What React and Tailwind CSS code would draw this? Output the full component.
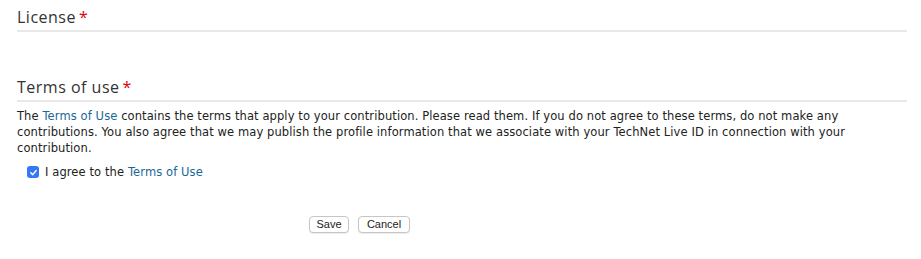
export default function App() {
  return (
    <div className="w-[921px] h-[259px] bg-white px-[17px] pt-[5px] text-[#333]" style={{ fontFamily: '"DejaVu Sans", Verdana, sans-serif' }}>
      <div className="w-[890px]">
        <h2 className="text-[16px] leading-[24px] tracking-[0.5px] text-[#333] pb-[1px] border-b-2 border-[#e8e8e8]" style={{ fontFamily: '"Open Sans", sans-serif' }}>
          License<span className="text-[#e50000] ml-[3px]">*</span>
        </h2>
        <h2 className="mt-[43px] text-[16px] leading-[24px] tracking-[0.5px] text-[#333] pb-[1px] border-b-2 border-[#e8e8e8]" style={{ fontFamily: '"Open Sans", sans-serif' }}>
          Terms of use<span className="text-[#e50000] ml-[3px]">*</span>
        </h2>
        <p className="mt-[6px] text-[11.5px] leading-[16px] tracking-[0.1px] text-[#222]">
          The <a className="text-[#1a6896]">Terms of Use</a> contains the terms that apply to your contribution. Please read them. If you do not agree to these terms, do not make any contributions. You also agree that we may publish the profile information that we associate with your TechNet Live ID in connection with your contribution.
        </p>
        <label className="mt-[8px] ml-[10px] flex items-center gap-[6px] text-[11.5px] leading-[16px] tracking-[0.1px] text-[#222]">
          <span className="w-[12px] h-[12px] rounded-[3px] bg-[#3478f6] flex items-center justify-center">
            <svg width="9" height="9" viewBox="0 0 10 10"><path d="M2 5.2 L4.2 7.4 L8 2.8" stroke="white" strokeWidth="1.6" fill="none" strokeLinecap="round" strokeLinejoin="round" /></svg>
          </span>
          <span>I agree to the <a className="text-[#1a6896]">Terms of Use</a></span>
        </label>
        <div className="mt-[36px] ml-[292px] flex gap-[9px]" style={{ fontFamily: '"Liberation Sans", Arial, sans-serif' }}>
          <button className="w-[40px] h-[17px] rounded-[4px] border border-[#c6c6c6] bg-white text-[11px] leading-[15px] text-[#222] shadow-[0_1px_1px_rgba(0,0,0,0.08)]">Save</button>
          <button className="w-[52px] h-[17px] rounded-[4px] border border-[#c6c6c6] bg-white text-[11px] leading-[15px] text-[#222] shadow-[0_1px_1px_rgba(0,0,0,0.08)]">Cancel</button>
        </div>
      </div>
    </div>
  );
}
